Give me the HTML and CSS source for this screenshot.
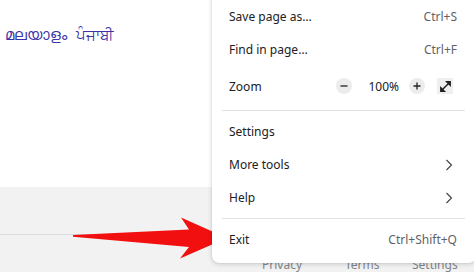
FILE: index.html
```html
<!DOCTYPE html>
<html>
<head>
<meta charset="utf-8">
<link rel="stylesheet" href="styles.css">
</head>
<body>
<div class="page">
  <div class="content">
    <div class="langs"><a class="lang">മലയാളം</a><a class="lang">ਪੰਜਾਬੀ</a></div>
  </div>
  <div class="footer">
    <div class="footer-top"></div>
    <div class="footer-bottom">
      <span class="flink privacy">Privacy</span><span class="flink terms">Terms</span><span class="flink">Settings</span>
    </div>
  </div>

  <svg class="arrow" width="474" height="272" viewBox="0 0 474 272">
    <polygon points="73,235 189,229.5 181,217.5 227,238 180,258.5 189,247 73,236.8" fill="#f20f0f"/>
  </svg>

  <div class="menu">
    <div class="item"><span>Save page as…</span><span class="key">Ctrl+S</span></div>
    <div class="item"><span>Find in page…</span><span class="key">Ctrl+F</span></div>
    <div class="item zoom">
      <span>Zoom</span>
      <div class="zctl">
        <span class="circ">
          <svg width="10" height="10" viewBox="0 0 10 10"><path d="M1.5 5h7" stroke="#202124" stroke-width="1.3"/></svg>
        </span>
        <span class="pct">100%</span>
        <span class="circ">
          <svg width="10" height="10" viewBox="0 0 10 10"><path d="M1.5 5h7M5 1.5v7" stroke="#202124" stroke-width="1.3"/></svg>
        </span>
        <span class="full">
          <svg width="13" height="13" viewBox="0 0 12 12"><path d="M2.5 9.5L9.5 2.5" stroke="#202124" stroke-width="1.4"/><path d="M5.5 1h5.5v5.5z M1 5.5v5.5h5.5z" fill="#202124"/></svg>
        </span>
      </div>
    </div>
    <div class="sep"></div>
    <div class="item"><span>Settings</span></div>
    <div class="item"><span>More tools</span><svg class="chev" width="8" height="12" viewBox="0 0 8 12"><path d="M1.5 1l5 5-5 5" fill="none" stroke="#3c4043" stroke-width="1.1"/></svg></div>
    <div class="item"><span>Help</span><svg class="chev" width="8" height="12" viewBox="0 0 8 12"><path d="M1.5 1l5 5-5 5" fill="none" stroke="#3c4043" stroke-width="1.1"/></svg></div>
    <div class="sep"></div>
    <div class="item"><span>Exit</span><span class="key">Ctrl+Shift+Q</span></div>
  </div>
</div>
</body>
</html>
```

FILE: styles.css
```css
html, body {
  margin: 0;
  padding: 0;
  background: #ffffff;
}
.page {
  position: relative;
  width: 474px;
  height: 272px;
  overflow: hidden;
  font-family: "Noto Sans", "Open Sans", sans-serif;
  display: flex;
  flex-direction: column;
}
.content {
  height: 188px;
  background: #ffffff;
}
.langs {
  padding: 24px 0 0 5px;
  display: flex;
  gap: 9px;
  font-size: 15px;
  line-height: 20px;
}
.lang {
  color: #3a32a6;
}
.footer {
  flex: 1;
  background: #f2f2f2;
  display: flex;
  flex-direction: column;
}
.footer-top {
  height: 47px;
  border-bottom: 1px solid #dadce0;
}
.footer-bottom {
  display: flex;
  padding: 23px 0 0 262px;
  font-size: 12px;
  color: #80858a;
  line-height: 14px;
  white-space: nowrap;
}
.privacy {
  width: 83px;
}
.terms {
  width: 67px;
}
.arrow {
  position: absolute;
  left: 0;
  top: 0;
}
.menu {
  position: absolute;
  left: 212px;
  top: -10px;
  width: 264px;
  padding: 10px 0 7px;
  background: #ffffff;
  border-radius: 7px;
  box-shadow: 0 1px 5px rgba(0,0,0,0.18), 0 0 1px rgba(0,0,0,0.2);
  font-size: 12px;
  color: #202124;
}
.item {
  height: 33px;
  display: flex;
  align-items: center;
  justify-content: space-between;
  padding: 0 19px 0 17px;
}
.item.zoom {
  height: 40px;
}
.key {
  color: #5f6368;
}
.sep {
  height: 1px;
  background: #e3e3e3;
  margin: 4px 11px 4px 10px;
}
.zctl {
  display: flex;
  align-items: center;
  margin-right: 4px;
}
.circ {
  width: 16px;
  height: 16px;
  border-radius: 50%;
  background: #ececec;
  display: flex;
  align-items: center;
  justify-content: center;
}
.pct {
  margin: 0 10px 0 16px;
}
.full {
  width: 16px;
  height: 16px;
  margin-left: 12px;
  background: #efefef;
  display: flex;
  align-items: center;
  justify-content: center;
}
.chev {
  margin-right: 4px;
}
```
